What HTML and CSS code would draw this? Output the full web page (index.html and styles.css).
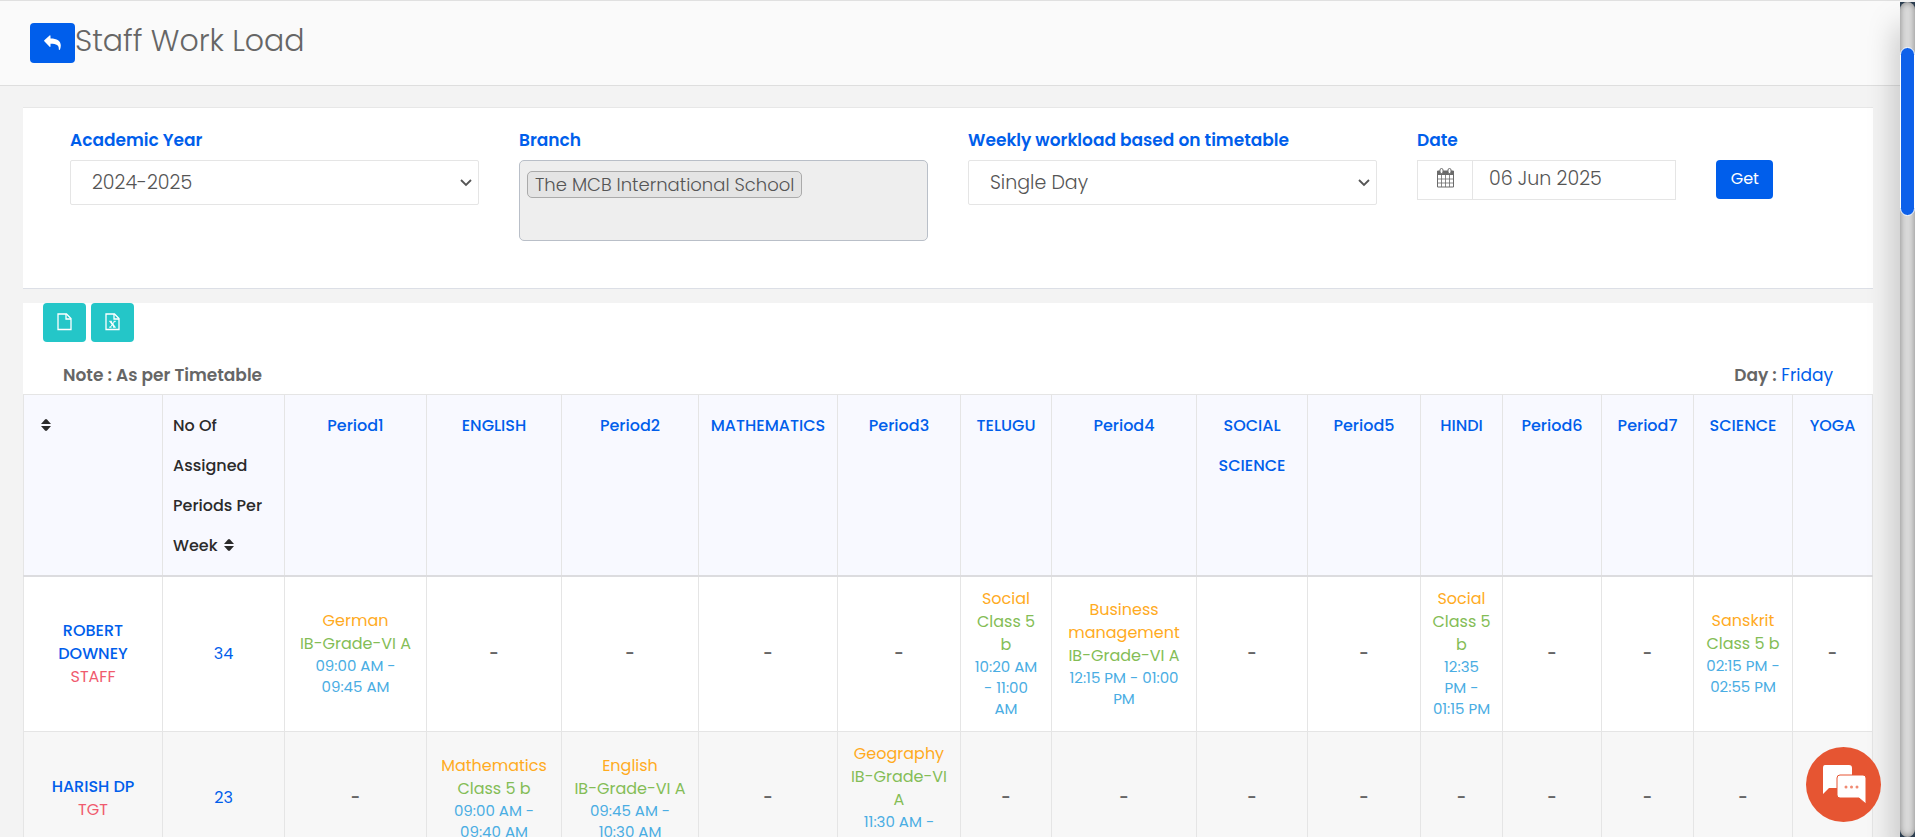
FILE: index.html
```html
<!DOCTYPE html>
<html lang="en">
<head>
  <meta charset="UTF-8">
  <title>Staff Work Load</title>
  <link rel="stylesheet" href="styles.css">
</head>
<body>

  <div class="page">

    <!-- Page title -->
    <header class="page-header">
      <button type="button" class="btn btn-back" aria-label="Back">
        <svg width="17" height="15" viewBox="0 0 17 15"><path d="M0.300 5.300L5.600.4C6 0 6.500.2 6.500.8V3.400c6.500 0 10.300 2 10.300 7.200 0 1.500-.3 2.800-.8 3.900-.2.500-.9.500-1.200 0 .4-4.500-2.300-5.800-8.300-5.800v2.600c0 .6-.5.800-.9.400L.3 6.300c-.3-.3-.3-.7 0-1z" fill="#fff"/></svg>
      </button>
      <h1>Staff Work Load</h1>
    </header>

    <main class="content">

      <!-- Filters -->
      <form class="panel filters">
        <div class="field">
          <label for="year">Academic Year</label>
          <div class="select">
            <select id="year">
              <option>2024-2025</option>
            </select>
            <svg width="12" height="8" viewBox="0 0 12 8"><path d="M1 1l5 5 5-5" fill="none" stroke="#555" stroke-width="1.800"/></svg>
          </div>
        </div>
        <div class="field">
          <label for="branch">Branch</label>
          <div class="tag-box">
            <span class="tag">The MCB International School</span>
            <input type="text" id="branch" disabled>
          </div>
        </div>
        <div class="field">
          <label for="workload">Weekly workload based on timetable</label>
          <div class="select">
            <select id="workload">
              <option>Single Day</option>
            </select>
            <svg width="12" height="8" viewBox="0 0 12 8"><path d="M1 1l5 5 5-5" fill="none" stroke="#555" stroke-width="1.800"/></svg>
          </div>
        </div>
        <div class="field field-date">
          <label for="date">Date</label>
          <div class="date-group">
            <span class="date-icon">
              <svg width="19" height="20" viewBox="0 0 19 20"><path d="M1.500 3h16v16h-16z" fill="none" stroke="#6b6b6b"/><path d="M1 3h17v4H1z" fill="#6b6b6b"/><path d="M1.500 11h16M1.500 15h16M5.500 7v12M9.500 7v12M13.500 7v12" fill="none" stroke="#6b6b6b" stroke-width=".8"/><rect x="4" y=".5" width="3" height="5" rx="1.500" fill="#fff" stroke="#6b6b6b"/><rect x="12" y=".5" width="3" height="5" rx="1.500" fill="#fff" stroke="#6b6b6b"/></svg>
            </span>
            <input type="text" id="date" value="06 Jun 2025">
          </div>
        </div>
        <div class="field field-action">
          <button type="button" class="btn">Get</button>
        </div>
      </form>

      <!-- Timetable report -->
      <section class="panel report">
        <div class="export">
          <button type="button" class="btn btn-export" aria-label="Export file">
            <svg width="15" height="18" viewBox="0 0 15 18" fill="none" stroke="#fff" stroke-width="1.300"><path d="M1 1h8.500L14 5.500V16.500H1z"/><path d="M9 1v5h5"/></svg>
          </button>
          <button type="button" class="btn btn-export" aria-label="Export Excel">
            <svg width="15" height="18" viewBox="0 0 15 18" fill="none" stroke="#fff" stroke-width="1.300"><path d="M1 1h8.500L14 5.500V16.500H1z"/><path d="M9 1v5h5"/><path d="M5.500 8.500l4 5.500" stroke-width="1.800"/><path d="M9.500 8.500l-4 5.500M4.200 8.300h2.600M8.500 8.300h2.300M4.200 14.200h2.300M8.200 14.200h2.600" stroke-width="1"/></svg>
          </button>
        </div>

        <div class="summary">
          <strong>Note : As per Timetable</strong>
          <span><strong>Day :</strong> <span class="day">Friday</span></span>
        </div>

        <table>
          <colgroup>
            <col><col><col><col><col><col><col><col>
            <col><col><col><col><col><col><col><col>
          </colgroup>
          <thead>
            <tr>
              <th class="sortable sort-name"><svg class="sort" width="10" height="12" viewBox="0 0 10 12"><path d="M0 5l4-4.500q1-.8 2 0L10 5zM0 7h10l-4 4.500q-1 .8-2 0z"/></svg></th>
              <th class="sortable">No Of Assigned Periods Per Week <svg class="sort" width="10" height="12" viewBox="0 0 10 12"><path d="M0 5l4-4.500q1-.8 2 0L10 5zM0 7h10l-4 4.500q-1 .8-2 0z"/></svg></th>
              <th>Period1</th>
              <th>ENGLISH</th>
              <th>Period2</th>
              <th>MATHEMATICS</th>
              <th>Period3</th>
              <th>TELUGU</th>
              <th>Period4</th>
              <th>SOCIAL SCIENCE</th>
              <th>Period5</th>
              <th>HINDI</th>
              <th>Period6</th>
              <th>Period7</th>
              <th>SCIENCE</th>
              <th>YOGA</th>
            </tr>
          </thead>
          <tbody>
            <tr>
              <td><div class="name">ROBERT DOWNEY</div><div class="role">STAFF</div></td>
              <td><a href="#">34</a></td>
              <td><div class="subject">German</div><div class="class">IB-Grade-VI A</div><div class="time">09:00 AM -<br>09:45 AM</div></td>
              <td>-</td>
              <td>-</td>
              <td>-</td>
              <td>-</td>
              <td><div class="subject">Social</div><div class="class">Class 5<br>b</div><div class="time">10:20 AM<br>- 11:00<br>AM</div></td>
              <td><div class="subject">Business management</div><div class="class">IB-Grade-VI A</div><div class="time">12:15 PM - 01:00<br>PM</div></td>
              <td>-</td>
              <td>-</td>
              <td><div class="subject">Social</div><div class="class">Class 5<br>b</div><div class="time">12:35<br>PM -<br>01:15 PM</div></td>
              <td>-</td>
              <td>-</td>
              <td><div class="subject">Sanskrit</div><div class="class">Class 5 b</div><div class="time">02:15 PM -<br>02:55 PM</div></td>
              <td>-</td>
            </tr>
            <tr>
              <td><div class="name">HARISH DP</div><div class="role">TGT</div></td>
              <td><a href="#">23</a></td>
              <td>-</td>
              <td><div class="subject">Mathematics</div><div class="class">Class 5 b</div><div class="time">09:00 AM -<br>09:40 AM</div></td>
              <td><div class="subject">English</div><div class="class">IB-Grade-VI A</div><div class="time">09:45 AM -<br>10:30 AM</div></td>
              <td>-</td>
              <td><div class="subject">Geography</div><div class="class">IB-Grade-VI<br>A</div><div class="time">11:30 AM -<br>12:15 PM</div></td>
              <td>-</td>
              <td>-</td>
              <td>-</td>
              <td>-</td>
              <td>-</td>
              <td>-</td>
              <td>-</td>
              <td>-</td>
              <td>-</td>
            </tr>
          </tbody>
        </table>
      </section>
    </main>
  </div>

  <!-- Scroll track -->
  <div class="scroll-side">
    <div class="scroll-track"><div class="scroll-thumb"></div></div>
  </div>

  <!-- Chat -->
  <button type="button" class="chat" aria-label="Chat">
    <svg width="44" height="40" viewBox="0 0 44 40"><path d="M3 0h24q3 0 3 3v17q0 3-3 3H7l-6 6V3q0-3 2-3z" fill="#fff"/><path d="M18 10h23q3 0 3 3v26l-7-6H18q-3 0-3-3V13q0-3 3-3z" fill="#fff" stroke="#e65532"/><g fill="#f08a72"><circle cx="24" cy="22" r="1.500"/><circle cx="29.500" cy="22" r="1.500"/><circle cx="35" cy="22" r="1.500"/></g></svg>
  </button>

</body>
</html>
```
FILE: styles.css
```css
* {
  box-sizing: border-box;
}

body {
  font-family: Poppins, Inter, "Noto Sans", sans-serif;
  font-size: 16px;
  line-height: 23px;
  margin: 0;
  height: 100vh;
  display: flex;
  overflow: hidden;
  background-color: #f3f3f3;
  color: #666;
}

.page {
  flex: 1;
  min-width: 0;
  overflow: hidden;
}

/* Page title */
.page-header {
  display: flex;
  align-items: flex-start;
  height: 86px;
  padding: 22px 30px 0;
  background-color: #fafafa;
  border-top: 1px solid #e0e0e0;
  border-bottom: 1px solid #dedede;
}

h1 {
  margin: 0;
  font-size: 30px;
  font-weight: 300;
  line-height: 36px;
}

/* Buttons */
.btn {
  display: flex;
  align-items: center;
  justify-content: center;
  width: 57px;
  height: 39px;
  padding: 0 0 2px;
  border: none;
  border-radius: 4px;
  background-color: #005eeb;
  color: #fff;
  font: inherit;
  cursor: pointer;
}

.btn-back {
  width: 45px;
  height: 40px;
}

.btn-export {
  width: 43px;
  background-color: #24c6c8;
}

/* Panels */
.content {
  padding: 21px 27px 0 23px;
}

.panel {
  background-color: #fff;
}

/* Filters */
.filters {
  display: grid;
  grid-template-columns: repeat(12, 1fr);
  height: 182px;
  padding: 20px 27px 0;
  border-top: 1px solid #e7e7e7;
  border-bottom: 1px solid #dcdfe6;
}

.field {
  grid-column: span 3;
  padding: 0 20px;
}

.field-date {
  grid-column: span 2;
}

.field-action {
  grid-column: span 1;
  padding-top: 32px;
}

.field label {
  display: block;
  margin-bottom: 8px;
  font-size: 17px;
  font-weight: 600;
  line-height: 24px;
  color: #005eeb;
}

.field select,
.field input {
  width: 100%;
  font-family: inherit;
  font-size: 19px;
  font-weight: 300;
  color: #555;
}

.select {
  display: grid;
  align-items: center;
}

.select select,
.select svg {
  grid-area: 1 / 1;
}

.select select {
  height: 45px;
  padding: 0 30px 0 21px;
  border: 1px solid #e5e5e5;
  border-radius: 2px;
  background-color: #fff;
  appearance: none;
}

.select svg {
  justify-self: end;
  margin-right: 7px;
  pointer-events: none;
}

.tag-box {
  display: flex;
  align-items: flex-start;
  height: 81px;
  padding: 10px 7px;
  border: 1px solid #b9bfc8;
  border-radius: 5px;
  background-color: #eee;
}

.tag {
  padding: 0 7px;
  border: 1px solid #aaa;
  border-radius: 5px;
  background-color: #e4e4e4;
  font-size: 18px;
  font-weight: 300;
  line-height: 25px;
  white-space: nowrap;
  color: #555;
}

.tag-box input {
  flex: 1;
  min-width: 0;
  border: none;
  background: none;
}

.date-group {
  display: flex;
  height: 40px;
  border: 1px solid #e5e5e5;
}

.date-icon {
  flex: 0 0 55px;
  padding-top: 7px;
  text-align: center;
  border-right: 1px solid #e5e5e5;
}

.date-group input {
  min-width: 0;
  padding: 0 16px 3px;
  border: none;
}

/* Report */
.report {
  margin-top: 14px;
}

.export {
  display: flex;
  gap: 5px;
  padding-left: 20px;
}

.summary {
  display: flex;
  justify-content: space-between;
  padding: 21px 40px 7px;
  font-size: 17px;
  line-height: 24px;
}

.summary strong {
  font-weight: 600;
}

.day {
  color: #005eeb;
}

/* Timetable */
table {
  width: 100%;
  table-layout: fixed;
  border-collapse: collapse;
}

col { width: 99px; }
col:nth-child(1) { width: 139px; }
col:nth-child(2) { width: 122px; }
col:nth-child(3) { width: 142px; }
col:nth-child(4) { width: 135px; }
col:nth-child(5) { width: 137px; }
col:nth-child(6) { width: 139px; }
col:nth-child(7) { width: 123px; }
col:nth-child(8) { width: 91px; }
col:nth-child(9) { width: 145px; }
col:nth-child(10) { width: 111px; }
col:nth-child(11) { width: 113px; }
col:nth-child(12) { width: 82px; }
col:nth-child(14) { width: 92px; }
col:nth-child(16) { width: 80px; }

th,
td {
  border: 1px solid #e5e5e5;
  text-align: center;
}

th {
  padding: 11px 10px 9px;
  vertical-align: top;
  border-bottom: 2px solid #dcdcdf;
  background-color: #f8f9ff;
  color: #005eeb;
  font-weight: 500;
  line-height: 40px;
}

.sortable {
  color: #2b2b2b;
  text-align: left;
}

.sort-name {
  padding-left: 15px;
}

.sort {
  margin-left: 2px;
  fill: #2b2b2b;
}

td {
  padding: 10px 10px 12px;
  vertical-align: middle;
  font-weight: 600;
}

tbody tr:nth-child(even) {
  background-color: #f7f7f7;
}

td a {
  color: #005eeb;
  font-weight: 400;
  text-decoration: none;
}

.name {
  color: #005eeb;
  font-weight: 500;
}

.role {
  color: #f05b6e;
  font-weight: 400;
}

.subject,
.class,
.time {
  margin: 0 -8px;
  font-weight: 400;
}

.subject {
  color: #ffab1f;
}

.class {
  color: #84bd56;
}

.time {
  color: #4aade3;
  font-size: 15px;
  line-height: 21px;
}

/* Scroll track on the right side */
.scroll-side {
  position: relative;
  flex: 0 0 15px;
  display: flex;
  margin-top: 2px;
  background-color: #2c3e50;
  box-shadow: 0 24px 30px rgba(0, 0, 0, 0.35);
}

.scroll-track {
  flex: 1;
  padding-top: 45px;
  border-radius: 8px;
  background-color: #d9d9d9;
  box-shadow: inset 0 0 6px rgba(0, 0, 0, 0.4);
}

.scroll-thumb {
  height: 169px;
  border: 1px solid #fff;
  border-radius: 8px;
  background-color: #0d60ea;
}

/* Floating chat button */
.chat {
  position: fixed;
  right: 34px;
  bottom: 15px;
  display: flex;
  align-items: center;
  justify-content: center;
  width: 75px;
  height: 75px;
  padding: 0;
  border: none;
  border-radius: 50%;
  background-color: #e65532;
  cursor: pointer;
}
```
